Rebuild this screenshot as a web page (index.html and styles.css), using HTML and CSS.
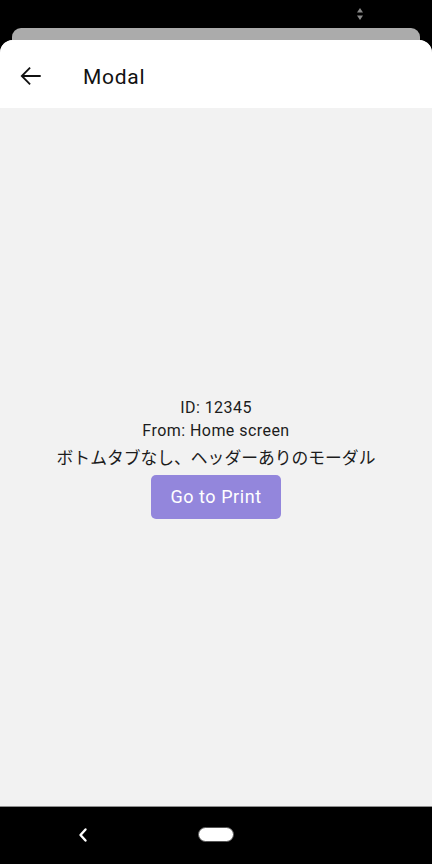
FILE: index.html
```html
<!DOCTYPE html>
<html lang="ja">
<head>
<meta charset="utf-8">
<meta name="viewport" content="width=432, initial-scale=1">
<title>Modal</title>
<link rel="stylesheet" href="styles.css">
</head>
<body>
<div class="screen">
  <div class="status">
    <svg class="status-icon" width="8" height="14" viewBox="0 0 8 14">
      <path d="M4 1 L7 5.5 L1 5.5 Z" fill="#8a8a8a"/>
      <path d="M4 13 L7 8.5 L1 8.5 Z" fill="#8a8a8a"/>
    </svg>
  </div>
  <div class="back-card"></div>
  <div class="modal">
    <header class="header">
      <button class="back-btn" aria-label="戻る">
        <svg width="24" height="24" viewBox="0 0 24 24">
          <path d="M21.7 12H3.4 M11.1 3.7 L2.8 12 L11.1 20.3" fill="none" stroke="#111" stroke-width="1.8" stroke-linejoin="miter"/>
        </svg>
      </button>
      <h1 class="title">Modal</h1>
    </header>
    <main class="content">
      <p class="line">ID: 12345</p>
      <p class="line">From: Home screen</p>
      <p class="line jp">ボトムタブなし、ヘッダーありのモーダル</p>
      <button class="primary">Go to Print</button>
    </main>
  </div>
  <nav class="navbar">
    <svg class="nav-back" width="12" height="16" viewBox="0 0 12 16">
      <path d="M8.5 2.5 L3.5 8 L8.5 13.5" fill="none" stroke="#fff" stroke-width="2.4" stroke-linecap="round" stroke-linejoin="round"/>
    </svg>
    <span class="home-pill"></span>
    <span class="nav-spacer"></span>
  </nav>
</div>
</body>
</html>
```

FILE: styles.css
```css
* { box-sizing: border-box; }

html, body {
  margin: 0;
  padding: 0;
  background: #000;
}

body {
  font-family: Roboto, "Noto Sans", "Noto Sans CJK JP", sans-serif;
  color: #1c1c1c;
}

.screen {
  width: 432px;
  height: 864px;
  display: flex;
  flex-direction: column;
  background: #000;
  overflow: hidden;
}

.status {
  height: 28px;
  flex: 0 0 28px;
  display: flex;
  justify-content: flex-end;
  align-items: flex-start;
  padding: 7px 68px 0 0;
}

.status-icon { display: block; }

.back-card {
  flex: 0 0 24px;
  margin: 0 12px;
  background: #ababab;
  border-radius: 9px 9px 0 0;
}

.modal {
  flex: 1;
  margin-top: -12px;
  display: flex;
  flex-direction: column;
  background: #f2f2f2;
  border-radius: 13px 13px 0 0;
  overflow: hidden;
}

.header {
  flex: 0 0 68px;
  background: #fff;
  display: flex;
  align-items: center;
  padding-left: 19px;
}

.back-btn {
  width: 24px;
  height: 24px;
  margin-top: 3px;
  padding: 0;
  border: 0;
  background: none;
  display: flex;
}

.title {
  margin: 5px 0 0 40px;
  font-size: 21px;
  font-weight: 400;
  color: #111;
  letter-spacing: 0.7px;
}

.content {
  flex: 1;
  display: flex;
  flex-direction: column;
  align-items: center;
  justify-content: center;
}

.line {
  margin: 0;
  font-size: 16px;
  line-height: 23px;
  letter-spacing: 0.45px;
  color: #1c1c1c;
}

.line.jp {
  font-family: "Noto Sans CJK JP", "Noto Sans", sans-serif;
  font-size: 16.8px;
  line-height: 30px;
  letter-spacing: 0;
}

.primary {
  margin-top: 3px;
  height: 44px;
  padding: 0 19px;
  border: 0;
  border-radius: 5px;
  background: #9386dc;
  color: #fff;
  font-family: Roboto, sans-serif;
  font-size: 18px;
  letter-spacing: 0.55px;
}

.navbar {
  flex: 0 0 58px;
  border-top: 1px solid #8e8e8e;
  background: #000;
  display: flex;
  align-items: center;
  justify-content: space-between;
  padding: 0 78px 2px 77px;
}

.nav-back { display: block; }

.home-pill {
  width: 36px;
  height: 15px;
  border-radius: 8px;
  background: #fff;
  border: 1px solid #555;
}

.nav-spacer { width: 12px; }
```
